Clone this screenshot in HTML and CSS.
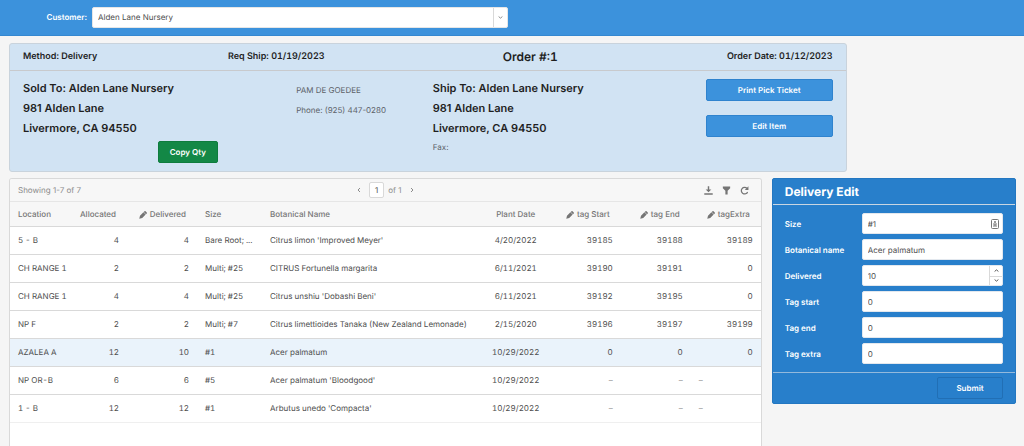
FILE: index.html
```html
<!DOCTYPE html>
<html lang="en">
<head>
    <meta charset="UTF-8">
    <meta name="viewport" content="width=device-width, initial-scale=1.0">
    <title>Delivery Edit</title>
    <link rel="stylesheet" href="styles.css">
</head>
<body>
<svg class="sprite" aria-hidden="true">
    <symbol id="pencil" viewBox="0 0 16 16"><path d="M0.500 15.500l1.500-6L8.800 2.700l4.500 4.500-6.800 6.800zM9.500 2l1.500-1.500a1.500 1.500 0 0 1 2.100 0l2.400 2.400a1.500 1.500 0 0 1 0 2.100L14 6.500z"/></symbol>
    <symbol id="up" viewBox="0 0 8 8"><path d="M1 5.500L4 3l3 2.500" fill="none" stroke="currentColor" stroke-width="1.500"/></symbol>
    <symbol id="down" viewBox="0 0 8 8"><path d="M1 2.500L4 5l3-2.500" fill="none" stroke="currentColor" stroke-width="1.500"/></symbol>
</svg>

<header class="topbar">
    <label for="customer">Customer:</label>
    <div class="select-wrapper">
        <select id="customer">
            <option>Alden Lane Nursery</option>
        </select>
        <span class="select-arrow"><svg><use href="#down"/></svg></span>
    </div>
</header>

<main class="page">
    <section class="order-card">
        <div class="order-head order-grid">
            <div class="span-3">Method: Delivery</div>
            <div class="span-3">Req Ship: 01/19/2023</div>
            <h1 class="order-number span-3">Order #:1</h1>
            <div class="order-date span-3">Order Date: 01/12/2023</div>
        </div>
        <div class="order-body order-grid">
            <div class="sold-to span-3">
                <div class="address">Sold To: Alden Lane Nursery<br>981 Alden Lane<br>Livermore, CA 94550</div>
                <button type="button" class="button copy-button">Copy Qty</button>
            </div>
            <div class="contact">PAM DE GOEDEE<br>Phone: (925) 447-0280</div>
            <div class="ship-to">
                <div class="address">Ship To: Alden Lane Nursery<br>981 Alden Lane<br>Livermore, CA 94550</div>
                <div class="fax">Fax:</div>
            </div>
            <div class="order-actions">
                <button type="button" class="button">Print Pick Ticket</button>
                <button type="button" class="button">Edit Item</button>
            </div>
        </div>
    </section>

    <section class="table-card">
        <div class="toolbar">
            <span class="showing">Showing 1-7 of 7</span>
            <div class="pager">
                <button type="button" class="icon-button" aria-label="Previous page">
                    <svg viewBox="0 0 8 8"><path d="M5 2L3 4l2 2" fill="none" stroke="currentColor"/></svg>
                </button>
                <input type="text" class="page-input" value="1" aria-label="Page">
                <span>of 1</span>
                <button type="button" class="icon-button" aria-label="Next page">
                    <svg viewBox="0 0 8 8"><path d="M3 2l2 2-2 2" fill="none" stroke="currentColor"/></svg>
                </button>
            </div>
            <div class="tools">
                <button type="button" class="icon-button" aria-label="Download">
                    <svg viewBox="0 0 16 16"><path d="M6.700 0.500h2.600V6H13l-5 5.200L3 6h3.700zM0.500 13h15v2.400h-15z"/></svg>
                </button>
                <button type="button" class="icon-button" aria-label="Filter">
                    <svg viewBox="0 0 16 16"><path d="M1.500 1h13v3L10 8.500V15H6V8.500L1.500 4z"/></svg>
                </button>
                <button type="button" class="icon-button" aria-label="Refresh">
                    <svg viewBox="0 0 16 16"><path d="M12.500 4.500A5.800 5.800 0 1 0 13.500 10.500" fill="none" stroke="currentColor" stroke-width="2.200"/><path d="M15 0.500v6.500H8.500z"/></svg>
                </button>
            </div>
        </div>
        <table>
            <colgroup>
                <col class="col-location">
                <col class="col-allocated">
                <col class="col-number">
                <col class="col-size">
                <col>
                <col class="col-number">
                <col class="col-number">
                <col class="col-number">
                <col class="col-number">
            </colgroup>
            <thead>
                <tr>
                    <th>Location</th>
                    <th class="num">Allocated</th>
                    <th class="num"><svg><use href="#pencil"/></svg>Delivered</th>
                    <th>Size</th>
                    <th>Botanical Name</th>
                    <th class="date">Plant Date</th>
                    <th class="num"><svg><use href="#pencil"/></svg>tag Start</th>
                    <th class="num"><svg><use href="#pencil"/></svg>tag End</th>
                    <th class="num"><svg><use href="#pencil"/></svg>tagExtra</th>
                </tr>
            </thead>
            <tbody>
                <tr><td>5 - B</td><td class="num">4</td><td class="num">4</td><td>Bare Root; ...</td><td>Citrus limon 'Improved Meyer'</td><td class="date">4/20/2022</td><td class="num">39185</td><td class="num">39188</td><td class="num">39189</td></tr>
                <tr><td>CH RANGE 1</td><td class="num">2</td><td class="num">2</td><td>Multi; #25</td><td>CITRUS Fortunella margarita</td><td class="date">6/11/2021</td><td class="num">39190</td><td class="num">39191</td><td class="num">0</td></tr>
                <tr><td>CH RANGE 1</td><td class="num">4</td><td class="num">4</td><td>Multi; #25</td><td>Citrus unshiu 'Dobashi Beni'</td><td class="date">6/11/2021</td><td class="num">39192</td><td class="num">39195</td><td class="num">0</td></tr>
                <tr><td>NP F</td><td class="num">2</td><td class="num">2</td><td>Multi; #7</td><td>Citrus limettioides Tanaka (New Zealand Lemonade)</td><td class="date">2/15/2020</td><td class="num">39196</td><td class="num">39197</td><td class="num">39199</td></tr>
                <tr class="selected"><td>AZALEA A</td><td class="num">12</td><td class="num">10</td><td>#1</td><td>Acer palmatum</td><td class="date">10/29/2022</td><td class="num">0</td><td class="num">0</td><td class="num">0</td></tr>
                <tr><td>NP OR-B</td><td class="num">6</td><td class="num">6</td><td>#5</td><td>Acer palmatum 'Bloodgood'</td><td class="date">10/29/2022</td><td class="num empty">–</td><td class="num empty">–</td><td class="empty">–</td></tr>
                <tr><td>1 - B</td><td class="num">12</td><td class="num">12</td><td>#1</td><td>Arbutus unedo 'Compacta'</td><td class="date">10/29/2022</td><td class="num empty">–</td><td class="num empty">–</td><td class="empty">–</td></tr>
            </tbody>
        </table>
    </section>

    <form class="edit-card">
        <h2>Delivery Edit</h2>
        <div class="fields">
            <label for="size">Size</label>
            <div class="field">
                <input type="text" id="size" value="#1">
                <svg class="autofill" viewBox="0 0 16 20"><rect x="1" y="1" width="14" height="18" rx="2" fill="none" stroke="currentColor" stroke-width="2"/><circle cx="8" cy="6" r="2"/><path d="M4 9h8v2H9v2h3v2H4v-2h3v-2H4z"/></svg>
            </div>
            <label for="botanical">Botanical name</label>
            <div class="field"><input type="text" id="botanical" value="Acer palmatum"></div>
            <label for="delivered">Delivered</label>
            <div class="field">
                <input type="number" id="delivered" value="10">
                <div class="stepper">
                    <button type="button" aria-label="Increase"><svg><use href="#up"/></svg></button>
                    <button type="button" aria-label="Decrease"><svg><use href="#down"/></svg></button>
                </div>
            </div>
            <label for="tag-start">Tag start</label>
            <div class="field"><input type="text" id="tag-start" value="0"></div>
            <label for="tag-end">Tag end</label>
            <div class="field"><input type="text" id="tag-end" value="0"></div>
            <label for="tag-extra">Tag extra</label>
            <div class="field"><input type="text" id="tag-extra" value="0"></div>
        </div>
        <div class="form-footer">
            <button type="submit" class="button submit-button">Submit</button>
        </div>
    </form>
</main>
</body>
</html>
```
FILE: styles.css
```css
:root {
    --primary: #3c92dc;
    --primary-dark: #287fcb;
    --text: #4d4d4d;
    --muted: #8c8c8c;
    --line: #d9d9d9;
}

* {
    box-sizing: border-box;
}

body {
    margin: 0;
    height: 100vh;
    display: flex;
    flex-direction: column;
    overflow: hidden;
    background: #f5f5f5;
    color: var(--text);
    font: 8px/12px Inter, "Liberation Sans", sans-serif;
    text-rendering: geometricPrecision;
}

button,
input,
select {
    font: inherit;
    color: inherit;
    margin: 0;
    text-rendering: inherit;
}

svg {
    width: 8px;
    height: 8px;
    fill: currentColor;
}

.sprite {
    display: none;
}

/* Customer bar */
.topbar {
    flex: none;
    display: grid;
    grid-template-columns: 77px minmax(0, 416px);
    column-gap: 5px;
    align-items: center;
    height: 36px;
    padding: 0 10px 1px;
    background: var(--primary);
    border-bottom: 1px solid #3488d1;
    color: #fff;
    font-weight: 600;
}

.topbar label {
    text-align: right;
}

.select-wrapper {
    position: relative;
    color: var(--text);
    font-weight: 400;
}

.select-wrapper select {
    display: block;
    width: 100%;
    height: 21px;
    padding: 0 20px 0 5px;
    appearance: none;
    background: #fff;
    border: 1px solid #e6e6e6;
    border-radius: 2px;
}

.select-arrow {
    position: absolute;
    top: 1px;
    right: 1px;
    bottom: 1px;
    width: 14px;
    display: grid;
    place-items: center;
    border-left: 1px solid var(--line);
    color: #888;
    pointer-events: none;
}

.select-arrow svg,
.stepper svg {
    width: 5px;
    height: 5px;
}

.page {
    flex: 1;
    display: grid;
    grid-template-columns: repeat(12, 1fr);
    grid-template-rows: auto 1fr;
    gap: 6px 10px;
    padding: 7px 8px 0 9px;
}

/* Order summary */
.order-card {
    grid-column: span 10;
    background: #d1e3f3;
    border: 1px solid #c9d3dc;
    border-radius: 3px;
    color: #1f1f1f;
}

.order-grid {
    display: grid;
    grid-template-columns: repeat(12, 1fr);
    column-gap: 10px;
    padding: 0 13px;
}

.span-3 {
    grid-column: span 3;
}

.order-head {
    align-items: center;
    height: 27px;
    border-bottom: 1px solid #c8cacd;
    font-size: 9px;
    font-weight: 600;
    line-height: 14px;
    font-variant-numeric: tabular-nums;
}

.order-number {
    margin: 0;
    font-size: 12px;
    font-weight: 600;
    text-align: center;
}

.order-date {
    text-align: right;
}

.order-body {
    padding-top: 7px;
    padding-bottom: 8px;
}

.sold-to {
    display: flex;
    flex-direction: column;
    gap: 3px;
}

.address {
    font-size: 11px;
    font-weight: 600;
    line-height: 20px;
    white-space: nowrap;
}

.contact {
    grid-column: 5 / span 2;
    padding-top: 2px;
    color: #5c6268;
    line-height: 20px;
    white-space: nowrap;
}

.ship-to {
    grid-column: 7 / span 3;
}

.fax {
    color: #5c6268;
    line-height: 18px;
}

.order-actions {
    grid-column: 11 / span 2;
    display: flex;
    flex-direction: column;
    gap: 14px;
    padding-top: 1px;
}

.button {
    height: 22px;
    padding: 0 11px;
    background: var(--primary);
    border: 1px solid #2f83ce;
    border-radius: 2px;
    color: #fff;
    font-weight: 600;
    cursor: pointer;
}

.copy-button {
    align-self: flex-end;
    background: #138846;
    border-color: #0e7c3d;
}

/* Items table */
.table-card {
    grid-column: span 9;
    background: #fff;
    border: 1px solid var(--line);
    border-bottom: 0;
    border-radius: 3px 3px 0 0;
    overflow: hidden;
}

.toolbar {
    display: grid;
    grid-template-columns: 1fr auto 1fr;
    align-items: center;
    height: 23px;
    padding: 0 8px;
    background: #f7f7f7;
    border-bottom: 1px solid #e6e6e6;
    color: var(--muted);
}

.pager {
    display: flex;
    align-items: center;
    gap: 4px;
}

.page-input {
    width: 15px;
    height: 16px;
    padding: 0;
    border: 1px solid var(--line);
    border-radius: 2px;
    background: #fff;
    color: var(--text);
    text-align: center;
}

.icon-button {
    display: grid;
    place-items: center;
    padding: 0;
    border: 0;
    background: none;
    cursor: pointer;
}

.pager .icon-button {
    width: 12px;
    height: 12px;
}

.tools {
    display: flex;
    justify-content: flex-end;
    gap: 9px;
    padding-right: 4px;
    color: #757575;
}

.tools svg {
    width: 9px;
    height: 9px;
}

table {
    width: 100%;
    table-layout: fixed;
    border-collapse: collapse;
    font-variant-numeric: tabular-nums;
}

.col-location {
    width: 67px;
}

.col-allocated {
    width: 50px;
}

.col-number {
    width: 70px;
}

.col-size {
    width: 65px;
}

th,
td {
    height: 28px;
    padding: 0 8px;
    border-bottom: 1px solid var(--line);
    text-align: left;
    white-space: nowrap;
    overflow: hidden;
    text-overflow: ellipsis;
}

th:first-child,
td:first-child {
    padding-right: 0;
}

th {
    height: 24px;
    background: #f7f7f7;
    color: #757575;
    font-weight: 500;
}

th svg {
    margin-right: 3px;
    vertical-align: middle;
}

th.num {
    padding: 0 11px 0 0;
}

.num {
    text-align: right;
}

.date {
    text-align: center;
}

.selected {
    background: #eaf3fb;
}

.empty {
    color: #999;
}

tbody tr:last-child td {
    border-color: #efefef;
}

/* Delivery form */
.edit-card {
    grid-column: span 3;
    align-self: start;
    background: var(--primary-dark);
    border: 1px solid #2377c1;
    border-radius: 2px;
    color: #fff;
    font-weight: 600;
}

.edit-card h2 {
    margin: 0;
    padding: 0 12px;
    border-bottom: 1px solid #c9d6e2;
    font-size: 12px;
    font-weight: 700;
    line-height: 25px;
}

.fields {
    display: grid;
    grid-template-columns: 72px 1fr;
    gap: 5px;
    align-items: center;
    padding: 8px 12px;
}

.field {
    position: relative;
    font-weight: 400;
    color: var(--text);
}

.field input {
    display: block;
    width: 100%;
    height: 21px;
    padding: 0 5px;
    background: #fff;
    border: 1px solid #e3e8ee;
    border-radius: 2px;
    appearance: textfield;
}

.field input::-webkit-inner-spin-button {
    appearance: none;
}

.autofill {
    position: absolute;
    top: 6px;
    right: 4px;
    height: 10px;
    color: #777;
}

.stepper {
    position: absolute;
    top: 1px;
    right: 1px;
    bottom: 1px;
    width: 13px;
    display: grid;
    grid-template-rows: 1fr 1fr;
    border-left: 1px solid var(--line);
}

.stepper button {
    display: grid;
    place-items: center;
    min-height: 0;
    padding: 0;
    border: 0;
    background: none;
}

.stepper button + button {
    border-top: 1px solid var(--line);
}

.form-footer {
    display: flex;
    justify-content: flex-end;
    padding: 4px 12px;
    border-top: 1px solid #93b9dc;
}

.submit-button {
    min-width: 66px;
    background: var(--primary-dark);
    border-color: #216fb5;
}
```
